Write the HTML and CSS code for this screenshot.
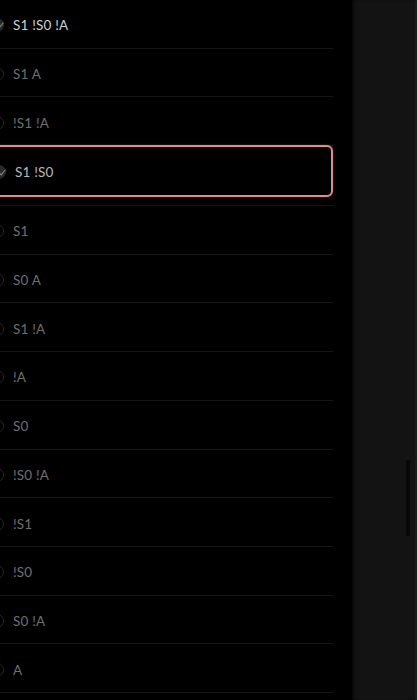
FILE: index.html
```html
<!DOCTYPE html>
<html>
<head>
<meta charset="utf-8">
<link rel="stylesheet" href="styles.css">
</head>
<body>
<div class="app">
  <div class="list-pane">
    <ul class="list">
      <li class="row checked bright"><span class="box"></span><span class="label">S1 !S0 !A</span></li>
      <li class="row"><span class="box"></span><span class="label">S1 A</span></li>
      <li class="row"><span class="box"></span><span class="label">!S1 !A</span></li>
      <li class="sel-wrap">
        <div class="row selected checked"><span class="box"></span><span class="label">S1 !S0</span></div>
      </li>
      <li class="row"><span class="box"></span><span class="label">S1</span></li>
      <li class="row"><span class="box"></span><span class="label">S0 A</span></li>
      <li class="row"><span class="box"></span><span class="label">S1 !A</span></li>
      <li class="row"><span class="box"></span><span class="label">!A</span></li>
      <li class="row"><span class="box"></span><span class="label">S0</span></li>
      <li class="row"><span class="box"></span><span class="label">!S0 !A</span></li>
      <li class="row"><span class="box"></span><span class="label">!S1</span></li>
      <li class="row"><span class="box"></span><span class="label">!S0</span></li>
      <li class="row"><span class="box"></span><span class="label">S0 !A</span></li>
      <li class="row"><span class="box"></span><span class="label">A</span></li>
    </ul>
  </div>
  <div class="side-pane">
    <div class="scroll-thumb"></div>
  </div>
</div>
</body>
</html>
```
FILE: styles.css
```css
html, body {
  margin: 0;
  padding: 0;
  background: #000;
  height: 100%;
  overflow: hidden;
}
body {
  font-family: Lato, "Open Sans", sans-serif;
  font-size: 13.5px;
  letter-spacing: 0.2px;
}
.app {
  display: flex;
  height: 700px;
}
.list-pane {
  width: 352px;
  flex: none;
  background: #000;
  overflow: hidden;
}
.list {
  list-style: none;
  margin: 0 0 0 -12px;
  padding: 0;
  width: 345px;
}
.row {
  display: flex;
  align-items: center;
  gap: 9px;
  height: 48.7px;
  box-sizing: border-box;
  border-bottom: 1px solid #161616;
  padding-left: 2px;
  padding-top: 3px;
  color: #6f6f6f;
}
.row.bright { color: #cfcfcf; }
.box {
  width: 14px;
  height: 14px;
  box-sizing: border-box;
  border-radius: 50%;
  border: 1.5px solid #262626;
  flex: none;
  position: relative;
}
.checked .box {
  background: #2a2a2a;
  border-color: #2a2a2a;
}
.checked .box::after {
  content: "";
  position: absolute;
  left: 7px;
  top: 2px;
  width: 3px;
  height: 6px;
  border-right: 1.5px solid #8a8a8a;
  border-bottom: 1.5px solid #8a8a8a;
  transform: rotate(40deg);
}
.sel-wrap {
  padding-bottom: 8px;
  border-bottom: 1px solid #101418;
  margin-top: -1px;
}
.row.selected {
  height: 52px;
  border: 2px solid #e38a90;
  border-radius: 6px;
  color: #b8b8b8;
  padding-left: 2px;
  padding-top: 1px;
  box-shadow: 0 0 2px rgba(227, 138, 144, 0.4);
}
.side-pane {
  flex: 1;
  background: #131313;
  box-shadow: inset 3px 0 4px -2px #000;
  border-right: 2px solid #1b1b1b;
  display: flex;
  justify-content: flex-end;
  padding-right: 5px;
}
.scroll-thumb {
  width: 4px;
  height: 76px;
  margin-top: 460px;
  background: #080808;
  border-radius: 2px;
}
```
